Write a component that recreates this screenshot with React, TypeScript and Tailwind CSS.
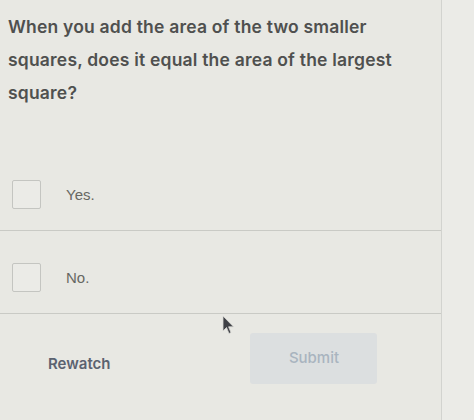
import React from 'react';

const Option = ({ label, bordered }: { label: string; bordered?: boolean }) => (
  <div
    className={`flex items-start gap-[25px] pl-3 pt-8 h-[83px] ${bordered ? 'border-b border-[#c9cac5]' : ''}`}
  >
    <div className="w-[29px] h-[29px] border border-[#c4c5c1] rounded-[2px] bg-[#ebebe7] shrink-0" />
    <span className="text-[15px] leading-[29px] text-[#666762] font-['Liberation_Sans',Arial,sans-serif]">
      {label}
    </span>
  </div>
);

const Cursor = () => (
  <svg
    className="absolute left-[222px] top-[315px]"
    width="13"
    height="20"
    viewBox="0 0 13 20"
  >
    <path
      d="M1 1 L1 16 L4.5 12.5 L7 18.5 L9 17.6 L6.6 11.8 L11.5 11.8 Z"
      fill="#3e4045"
      stroke="#d9d9d5"
      strokeWidth="0.8"
    />
  </svg>
);

export default function App() {
  return (
    <div className="relative w-[474px] h-[420px] bg-[#e8e8e3] flex overflow-hidden font-['Inter',sans-serif]">
      <div className="w-[442px] border-r border-[#d2d3cf] flex flex-col">
        <div className="pl-2 pt-[10px] h-[148px]">
          <p className="w-[400px] text-[17.5px] leading-[33px] font-semibold text-[#4f504f] tracking-[0.2px]">
            When you add the area of the two smaller squares, does it equal the area of the largest
            square?
          </p>
        </div>
        <Option label="Yes." bordered />
        <Option label="No." bordered />
        <div className="flex items-start pt-[19px]">
          <span className="ml-12 mt-[21px] text-[15px] font-semibold text-[#5b6270] leading-5">
            Rewatch
          </span>
          <button
            type="button"
            className="ml-[140px] w-[127px] h-[51px] rounded-[3px] bg-[#dcdfe0] text-[15px] font-medium text-[#a9b4bf]"
          >
            Submit
          </button>
        </div>
      </div>
      <div className="flex-1 bg-[#ebebe7]" />
      <Cursor />
    </div>
  );
}
